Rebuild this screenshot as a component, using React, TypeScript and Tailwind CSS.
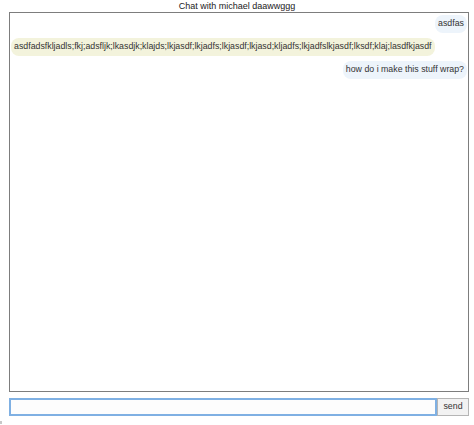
import React, { useState } from 'react';

type Message = { id: number; text: string; mine: boolean };

const messages: Message[] = [
  { id: 1, text: 'asdfas', mine: true },
  {
    id: 2,
    text: 'asdfadsfkljadls;fkj;adsfljk;lkasdjk;klajds;lkjasdf;lkjadfs;lkjasdf;lkjasd;kljadfs;lkjadfslkjasdf;lksdf;klaj;lasdfkjasdf',
    mine: false,
  },
  { id: 3, text: 'how do i make this stuff wrap?', mine: true },
];

export default function App() {
  const [draft, setDraft] = useState('');

  return (
    <div
      className="w-[474px] h-[425px] bg-white text-[#333] relative"
      style={{ fontFamily: '"Liberation Sans", Arial, sans-serif' }}
    >
      <div className="text-center text-[9px] leading-[12px] text-[#222]">Chat with michael daawwggg</div>

      <div className="ml-[9px] mr-[5px] h-[380px] border border-[#7d7d7d] flex flex-col gap-[5px] px-[1px] pt-[2px]">
        {messages.map((m) => (
          <div key={m.id} className={`flex ${m.mine ? 'justify-end' : 'justify-start'}`}>
            <div
              className={`h-[18px] flex items-center px-[3px] rounded-[8px] text-[8.8px] whitespace-nowrap ${
                m.mine ? 'bg-[#edf4fb]' : 'bg-[#f3f3dc]'
              }`}
            >
              {m.text}
            </div>
          </div>
        ))}
      </div>

      <div className="ml-[9px] mr-[5px] mt-[6px] flex h-[18px]">
        <input
          value={draft}
          onChange={(e) => setDraft(e.target.value)}
          className="flex-1 min-w-0 h-full border-2 border-[#7fb0e3] bg-[#fdfdfd] outline-none px-1 text-[9px]"
        />
        <button className="w-[32px] h-full border border-[#b5b5b5] bg-[#f2f2f2] text-[8.8px] text-[#333]">
          send
        </button>
      </div>

      <div className="absolute left-0 bottom-[1px] w-[2px] h-[3px] bg-[#c8c8c8]" />
    </div>
  );
}
